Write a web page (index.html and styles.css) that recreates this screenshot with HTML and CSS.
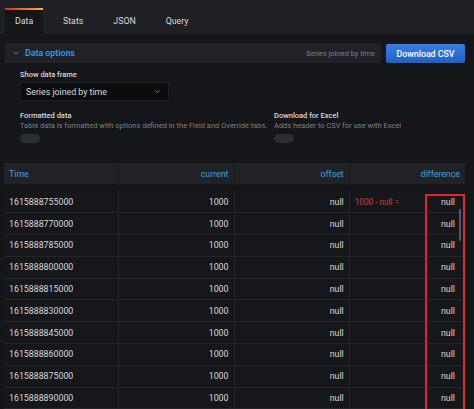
FILE: index.html
```html
<!DOCTYPE html>
<html lang="en">
<head>
  <meta charset="UTF-8" />
  <title>Inspect - Data</title>
  <link rel="stylesheet" href="styles.css">
</head>
<body>

  <nav class="tabs">
    <div class="tab active">Data</div>
    <div class="tab">Stats</div>
    <div class="tab">JSON</div>
    <div class="tab">Query</div>
  </nav>

  <div class="content">
    <div class="options-header">
      <div class="options-bar">
        <svg class="chevron" width="6" height="4" viewBox="0 0 6 4">
          <path d="M0.5 0.8 L3 3.2 L5.5 0.8" fill="none" stroke="#7b8087" stroke-width="1"/>
        </svg>
        <span class="options-title">Data options</span>
        <span class="options-summary">Series joined by time</span>
      </div>
      <button class="btn-csv">Download CSV</button>
    </div>

    <div class="options-body">
      <div class="field-label">Show data frame</div>
      <div class="select">
        <span>Series joined by time</span>
        <svg width="5" height="3" viewBox="0 0 5 3">
          <path d="M0.5 0.5 L2.5 2.5 L4.5 0.5" fill="none" stroke="#8e8e8e" stroke-width="0.8"/>
        </svg>
      </div>

      <div class="switch-row">
        <div class="switch-col">
          <div class="field-label">Formatted data</div>
          <div class="field-desc">Table data is formatted with options defined in the Field and Override tabs.</div>
          <div class="toggle"></div>
        </div>
        <div class="switch-col">
          <div class="field-label">Download for Excel</div>
          <div class="field-desc">Adds header to CSV for use with Excel</div>
          <div class="toggle"></div>
        </div>
      </div>
    </div>

    <div class="table">
      <div class="thead">
        <div class="cell left">Time</div>
        <div class="cell">current</div>
        <div class="cell">offset</div>
        <div class="cell">difference</div>
      </div>
      <div class="tbody" id="rows"></div>
      <div class="highlight"></div>
      <div class="scrollbar"></div>
    </div>
  </div>

  <script>
    // ROWS
    const rows = document.getElementById("rows");
    const start = 1615888755000;

    for (let i = 0; i < 10; i++) {
      const tr = document.createElement("div");
      tr.className = "row";
      const note = i === 0 ? '<span class="note">1000 - null =</span>' : "";
      tr.innerHTML = `
        <div class="cell left">${start + i * 15000}</div>
        <div class="cell">1000</div>
        <div class="cell">null</div>
        <div class="cell">${note}null</div>
      `;
      rows.appendChild(tr);
    }
  </script>

</body>
</html>
```

FILE: styles.css
```css
:root {
  --page-bg: #141619;
  --bar-bg: #1f2024;
  --panel-bg: #202226;
  --text: #d8d9da;
  --text-muted: #7b8087;
  --link: #33a2e5;
  --border: #22252a;
}

html, body {
  height: 409px;
  overflow: hidden;
}

body {
  margin: 0;
  font-family: Roboto, "Liberation Sans", sans-serif;
  font-size: 8.8px;
  background-color: var(--page-bg);
  color: var(--text);
}

.tabs {
  display: flex;
  align-items: flex-end;
  gap: 10px;
  height: 34px;
  padding-left: 5px;
  background-color: var(--bar-bg);
}

.tab {
  position: relative;
  height: 26px;
  line-height: 27px;
  padding: 0 10px;
  color: var(--text);
}

.tab.active {
  background-color: var(--page-bg);
  width: 18px;
}

.tab.active::before {
  content: "";
  position: absolute;
  top: 0;
  left: 0;
  right: 0;
  height: 1.5px;
  background: linear-gradient(to right, #e0262f, #f5b91e);
}

.content {
  height: 366px;
  overflow: hidden;
  padding: 9px 9px 0 4px;
}

.options-header {
  display: flex;
  gap: 5px;
  height: 20px;
  margin-left: 1px;
}

.options-bar {
  flex: 1;
  display: flex;
  align-items: center;
  background-color: var(--panel-bg);
  padding: 0 6px 0 8px;
}

.chevron {
  margin-right: 6px;
}

.options-title {
  color: var(--link);
  font-weight: 500;
}

.options-summary {
  margin-left: auto;
  font-size: 7.5px;
  color: var(--text-muted);
}

.btn-csv {
  width: 79px;
  height: 19px;
  margin-top: 1px;
  border: none;
  border-radius: 2px;
  background: linear-gradient(to bottom, #3b7de0, #1f60c4);
  color: white;
  font-family: inherit;
  font-size: 8.8px;
  font-weight: 500;
  padding: 0;
}

.options-body {
  padding-left: 16px;
}

.field-label {
  font-size: 7.5px;
  line-height: 10px;
  font-weight: 500;
  color: var(--text);
}

.options-body > .field-label {
  margin-top: 7px;
}

.select {
  display: flex;
  align-items: center;
  justify-content: space-between;
  width: 149px;
  height: 19px;
  margin-top: 2px;
  padding: 0 8px 0 5px;
  background-color: #0b0c0e;
  border: 1px solid #1c1e22;
  box-sizing: border-box;
  color: var(--text);
}

.switch-row {
  display: flex;
  margin-top: 10px;
}

.switch-col:first-child {
  width: 254px;
}

.field-desc {
  font-size: 7.5px;
  line-height: 10px;
  color: var(--text-muted);
}

.toggle {
  width: 20px;
  height: 9px;
  margin-top: 3px;
  border-radius: 5px;
  background-color: #2a2d31;
}

.table {
  position: relative;
  width: 461px;
  margin-top: 20px;
}

.thead,
.row {
  display: grid;
  grid-template-columns: repeat(4, 1fr);
}

.thead {
  height: 21px;
  background-color: var(--panel-bg);
  color: var(--link);
  margin-bottom: 7.4px;
}

.thead .cell {
  border-right: 1px solid #181a1d;
}

.cell {
  display: flex;
  align-items: center;
  justify-content: flex-end;
  padding: 0 5px;
  border-right: 1px solid var(--border);
}

.cell:last-child {
  border-right: none;
}

.row .cell:last-child {
  padding-right: 10px;
}

.cell.left {
  justify-content: flex-start;
}

.row {
  height: 21.8px;
  box-sizing: border-box;
  border-bottom: 1px solid var(--border);
  background-color: #15171a;
}

.note {
  margin-right: auto;
  color: #e02f44;
  font-size: 8.2px;
}

.highlight {
  position: absolute;
  left: 421px;
  top: 31px;
  width: 40px;
  height: 220px;
  box-sizing: border-box;
  border: 2.5px solid #e0262f;
}

.scrollbar {
  position: absolute;
  left: 455px;
  top: 46px;
  width: 2px;
  height: 32px;
  border-radius: 1px;
  background-color: #4c5874;
}
```
